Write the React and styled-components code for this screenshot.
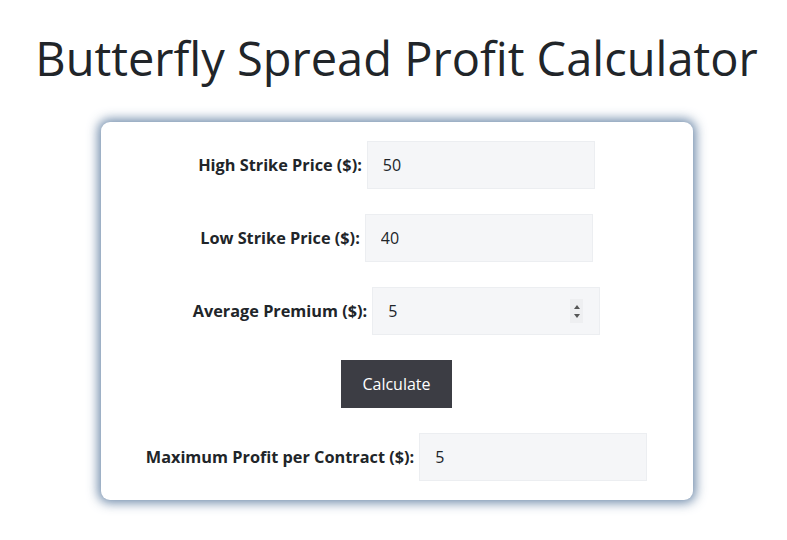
import React, { useState } from "react";
import styled, { createGlobalStyle } from "styled-components";

const Global = createGlobalStyle`
  body {
    margin: 0;
    background: #ffffff;
    font-family: "Open Sans", "Noto Sans", sans-serif;
    color: #212529;
  }
`;

const Page = styled.div`
  display: flex;
  flex-direction: column;
  align-items: center;
  padding-top: 22px;
  padding-left: 6px;
  padding-bottom: 30px;
`;

const Title = styled.h1`
  margin: 0 0 28px;
  font-size: 47px;
  font-weight: 400;
  line-height: 72px;
  color: #212529;
`;

const Card = styled.form`
  width: 592px;
  box-sizing: border-box;
  background: #fff;
  border-radius: 9px;
  box-shadow: 0 0 11px 3px rgba(88, 120, 156, 0.85);
  padding: 19px 0;
  display: flex;
  flex-direction: column;
  align-items: center;
  gap: 25px;
`;

const Row = styled.div`
  display: flex;
  align-items: center;
  justify-content: center;
  gap: 5px;
`;

const Label = styled.label`
  font-weight: 700;
  font-size: 16.3px;
  color: #212529;
`;

const Field = styled.div`
  position: relative;
  display: flex;
`;

const Input = styled.input`
  box-sizing: border-box;
  width: 228px;
  height: 48px;
  padding: 0 15px;
  border: 1px solid #eceef1;
  background: #f5f6f8;
  font-family: inherit;
  font-size: 16px;
  color: #212529;
  outline: none;
  -moz-appearance: textfield;
  &::-webkit-inner-spin-button,
  &::-webkit-outer-spin-button {
    -webkit-appearance: none;
    margin: 0;
  }
`;

const Spinner = styled.div`
  position: absolute;
  right: 17px;
  top: 12px;
  width: 13px;
  height: 24px;
  background: #eeeff1;
  display: flex;
  flex-direction: column;
  align-items: center;
  justify-content: center;
  gap: 5px;
`;

const Arrow = styled.span`
  width: 0;
  height: 0;
  border-left: 3.5px solid transparent;
  border-right: 3.5px solid transparent;
  ${(p) =>
    p.$up
      ? "border-bottom: 4px solid #555;"
      : "border-top: 4px solid #555;"}
`;

const Button = styled.button`
  height: 48px;
  width: 111px;
  border: none;
  border-radius: 0;
  background: #3c3d44;
  color: #fff;
  font-family: inherit;
  font-size: 16px;
  cursor: pointer;
`;

export default function App() {
  const [high, setHigh] = useState("50");
  const [low, setLow] = useState("40");
  const [prem, setPrem] = useState("5");
  const [result, setResult] = useState("5");

  const calc = (e) => {
    e.preventDefault();
    const h = parseFloat(high);
    const l = parseFloat(low);
    const p = parseFloat(prem);
    setResult(String((h - l) / 2 - p));
  };

  const step = (d) => setPrem(String((parseFloat(prem) || 0) + d));

  return (
    <Page>
      <Global />
      <Title>Butterfly Spread Profit Calculator</Title>
      <Card onSubmit={calc}>
        <Row>
          <Label>High Strike Price ($):</Label>
          <Input value={high} onChange={(e) => setHigh(e.target.value)} />
        </Row>
        <Row>
          <Label>Low Strike Price ($):</Label>
          <Input value={low} onChange={(e) => setLow(e.target.value)} />
        </Row>
        <Row>
          <Label>Average Premium ($):</Label>
          <Field>
            <Input type="number" value={prem} onChange={(e) => setPrem(e.target.value)} />
            <Spinner>
              <Arrow $up onClick={() => step(1)} />
              <Arrow onClick={() => step(-1)} />
            </Spinner>
          </Field>
        </Row>
        <Button type="submit">Calculate</Button>
        <Row>
          <Label>Maximum Profit per Contract ($):</Label>
          <Input value={result} readOnly />
        </Row>
      </Card>
    </Page>
  );
}
